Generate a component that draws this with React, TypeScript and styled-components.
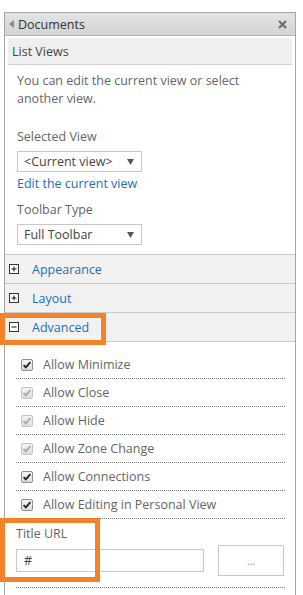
import styled, { createGlobalStyle } from "styled-components";

const GlobalStyle = createGlobalStyle`
  body {
    margin: 0;
    background: #fff;
    font-family: "Open Sans", "Noto Sans", sans-serif;
  }
`;

// 데이터
const options = [
  { label: "Allow Minimize", enabled: true },
  { label: "Allow Close", enabled: false },
  { label: "Allow Hide", enabled: false },
  { label: "Allow Zone Change", enabled: false },
  { label: "Allow Connections", enabled: true },
  { label: "Allow Editing in Personal View", enabled: true },
];

const Page = styled.div`
  position: relative;
  padding: 12px 0 0 4px;
  height: 583px;
  overflow: hidden;
`;

const Pane = styled.div`
  width: 290px;
  height: 600px;
  border: 1px solid #a6a6a6;
  border-bottom: none;
`;

const Header = styled.div`
  height: 22px;
  display: flex;
  align-items: center;
  padding: 0 8px 0 4px;
  background: linear-gradient(#e3e3e3, #d4d4d4);
  border-bottom: 1px solid #b4b4b4;
  font-size: 12.5px;
  color: #333;
`;

const HeaderTitle = styled.span`
  flex: 1;
  margin-left: 4px;
`;

const ListViews = styled.div`
  margin: 2px 3px 0;
`;

const Band = styled.div`
  height: 26px;
  display: flex;
  align-items: center;
  padding-left: 4px;
  background: #efefef;
  border-bottom: 1px solid #d0d0d0;
  font-size: 12.5px;
  color: #444;
`;

const Body = styled.div`
  padding: 7px 9px 9px;
  font-size: 12.5px;
  color: #666;
`;

const Text = styled.p`
  margin: 0;
  line-height: 18px;
`;

const Label = styled.div<{ top: number }>`
  margin-top: ${(p) => p.top}px;
  line-height: 18px;
`;

const Select = styled.div`
  box-sizing: border-box;
  width: 125px;
  height: 21px;
  margin-top: 5px;
  padding: 0 7px 0 6px;
  display: flex;
  align-items: center;
  justify-content: space-between;
  border: 1px solid #c8c8c8;
  color: #444;
`;

const Link = styled.a`
  display: block;
  margin-top: 2px;
  line-height: 20px;
  color: #1e6fb4;
  text-decoration: none;
`;

const Category = styled.div`
  height: 28px;
  display: flex;
  align-items: center;
  padding-left: 4px;
  background: #f1f1f1;
  border-top: 1px solid #cacaca;
  font-size: 12.5px;
  color: #1e6fb4;
`;

const CategoryText = styled.span`
  margin-left: 13px;
`;

const Options = styled.div`
  padding: 9px 10px 0 11px;
  border-top: 1px solid #cacaca;
`;

const OptionRow = styled.div`
  height: 27px;
  display: flex;
  align-items: center;
  padding-left: 5px;
  border-bottom: 1px dotted #7a7a7a;
  font-size: 12.5px;
  color: #666;
`;

const OptionText = styled.span`
  margin-left: 10px;
`;

const UrlRow = styled.div`
  padding-top: 6px;
  padding-bottom: 11px;
  border-bottom: 1px dotted #7a7a7a;
  font-size: 12.5px;
  color: #666;
`;

const UrlControls = styled.div`
  display: flex;
  align-items: center;
  margin-top: 3px;
`;

const Input = styled.div`
  box-sizing: border-box;
  width: 188px;
  height: 23px;
  padding-left: 7px;
  display: flex;
  align-items: center;
  border: 1px solid #c8c8c8;
  color: #444;
`;

const Browse = styled.div`
  box-sizing: border-box;
  width: 66px;
  height: 31px;
  margin-left: 14px;
  display: flex;
  align-items: center;
  justify-content: center;
  border: 1px solid #c8c8c8;
  font-size: 10px;
  color: #888;
`;

// 주석용 주황 박스 (스크린샷 위에 덧그린 표시)
const Highlight = styled.div<{ top: number; w: number; h: number }>`
  position: absolute;
  left: 0;
  top: ${(p) => p.top}px;
  width: ${(p) => p.w}px;
  height: ${(p) => p.h}px;
  box-sizing: border-box;
  border: 5px solid #f5822a;
`;

const Arrow = () => (
  <svg width="7" height="6" viewBox="0 0 7 6">
    <path d="M0 0 H7 L3.5 6 Z" fill="#555" />
  </svg>
);

const Expander = ({ open }: { open: boolean }) => (
  <svg width="10" height="10" viewBox="0 0 10 10">
    <rect x="0.5" y="0.5" width="9" height="9" fill="#fff" stroke="#333" />
    <path d="M2.5 5 H7.5" stroke="#111" />
    {!open && <path d="M5 2.5 V7.5" stroke="#111" />}
  </svg>
);

const Check = ({ enabled }: { enabled: boolean }) => (
  <svg width="12" height="12" viewBox="0 0 12 12">
    <defs>
      <linearGradient id="cb" x1="0" y1="0" x2="0" y2="1">
        <stop offset="0" stopColor="#f4f4f4" />
        <stop offset="1" stopColor="#dcdcdc" />
      </linearGradient>
    </defs>
    <rect x="0.5" y="0.5" width="11" height="11" rx="1.5" fill="url(#cb)" stroke={enabled ? "#8f8f8f" : "#c4c4c4"} />
    <path
      d="M2.6 6.2 L4.8 8.4 L9.4 3.2"
      fill="none"
      stroke={enabled ? "#222" : "#a8a8a8"}
      strokeWidth="1.8"
    />
  </svg>
);

export default function App() {
  return (
    <>
      <GlobalStyle />
      <Page>
        <Pane>
          <Header>
            <svg width="5" height="8" viewBox="0 0 5 8">
              <path d="M5 0 V8 L0 4 Z" fill="#8a8a8a" />
            </svg>
            <HeaderTitle>Documents</HeaderTitle>
            <svg width="9" height="9" viewBox="0 0 9 9">
              <path d="M1 1 L8 8 M8 1 L1 8" stroke="#6e6e6e" strokeWidth="2.2" />
            </svg>
          </Header>

          <ListViews>
            <Band>List Views</Band>
            <Body>
              <Text>You can edit the current view or select another view.</Text>
              <Label top={20}>Selected View</Label>
              <Select>
                <span>&lt;Current view&gt;</span>
                <Arrow />
              </Select>
              <Link href="#">Edit the current view</Link>
              <Label top={7}>Toolbar Type</Label>
              <Select>
                <span>Full Toolbar</span>
                <Arrow />
              </Select>
            </Body>
          </ListViews>

          <Category>
            <Expander open={false} />
            <CategoryText>Appearance</CategoryText>
          </Category>
          <Category>
            <Expander open={false} />
            <CategoryText>Layout</CategoryText>
          </Category>
          <Category>
            <Expander open />
            <CategoryText>Advanced</CategoryText>
          </Category>

          <Options>
            {options.map((o) => (
              <OptionRow key={o.label}>
                <Check enabled={o.enabled} />
                <OptionText>{o.label}</OptionText>
              </OptionRow>
            ))}
            <UrlRow>
              <div>Title URL</div>
              <UrlControls>
                <Input>#</Input>
                <Browse>...</Browse>
              </UrlControls>
            </UrlRow>
          </Options>
        </Pane>

        <Highlight top={313} w={106} h={32} />
        <Highlight top={518} w={100} h={64} />
      </Page>
    </>
  );
}
